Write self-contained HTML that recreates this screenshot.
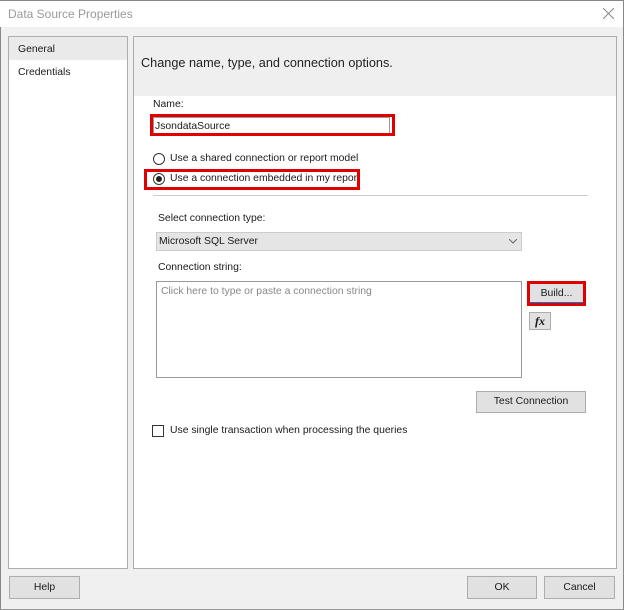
<!DOCTYPE html>
<html><head><style>
*{margin:0;padding:0;box-sizing:border-box}
body{width:624px;height:610px;background:#f0f0f0;font-family:"Liberation Sans",sans-serif;font-size:10.4px;color:#1a1a1a;position:relative;overflow:hidden}
.a{position:absolute}
.btn{position:absolute;background:#e1e1e1;border:1px solid #adadad;text-align:center;font-size:10.4px}
.red{position:absolute;border:3px solid #e00000}
</style></head><body>
<div class="a" style="left:0;top:0;width:624px;height:27px;background:#fff;border-top:1px solid #888;border-right:1px solid #888"></div>
<div class="a" style="left:8px;top:7px;font-size:12px;color:#999">Data Source Properties</div>
<svg class="a" style="left:603px;top:8px" width="11" height="11"><path d="M0 0L11 11M11 0L0 11" stroke="#888" stroke-width="1"/></svg>
<div class="a" style="left:0;top:27px;width:1px;height:583px;background:#888"></div>
<div class="a" style="left:623px;top:27px;width:1px;height:583px;background:#888"></div>
<div class="a" style="left:0;top:609px;width:624px;height:1px;background:#999"></div>

<div class="a" style="left:8px;top:36px;width:120px;height:533px;background:#fff;border:1px solid #adadad"></div>
<div class="a" style="left:9px;top:37px;width:118px;height:23px;background:#eaeaea"></div>
<div class="a" style="left:18px;top:44px">General</div>
<div class="a" style="left:18px;top:67px">Credentials</div>

<div class="a" style="left:133px;top:36px;width:484px;height:533px;background:#fff;border:1px solid #adadad"></div>
<div class="a" style="left:134px;top:37px;width:482px;height:59px;background:#efefef"></div>
<div class="a" style="left:141px;top:56px;font-size:12.7px;color:#222">Change name, type, and connection options.</div>

<div class="a" style="left:153px;top:99px">Name:</div>
<div class="a" style="left:153px;top:117px;width:237px;height:18px;border:1px solid #999;background:#fff"></div>
<div class="a" style="left:155px;top:121px">JsondataSource</div>
<div class="red" style="left:150px;top:114px;width:245px;height:22px"></div>

<div class="a" style="left:153px;top:153px;width:12px;height:12px;border:1px solid #333;border-radius:50%;background:#fff"></div>
<div class="a" style="left:170px;top:153px">Use a shared connection or report model</div>
<div class="a" style="left:153px;top:173px;width:12px;height:12px;border:1px solid #333;border-radius:50%;background:#fff"></div>
<div class="a" style="left:156px;top:176px;width:6px;height:6px;border-radius:50%;background:#222"></div>
<div class="a" style="left:170px;top:173px">Use a connection embedded in my report</div>
<div class="red" style="left:144px;top:169px;width:216px;height:21px"></div>
<div class="a" style="left:153px;top:195px;width:435px;height:1px;background:#ccc"></div>

<div class="a" style="left:158px;top:213px">Select connection type:</div>
<div class="a" style="left:156px;top:232px;width:366px;height:19px;background:#e5e5e5;border:1px solid #ccc"></div>
<div class="a" style="left:159px;top:236px">Microsoft SQL Server</div>
<svg class="a" style="left:509px;top:239px" width="8" height="5"><path d="M0 0L4 4L8 0" stroke="#666" fill="none"/></svg>

<div class="a" style="left:158px;top:262px">Connection string:</div>
<div class="a" style="left:156px;top:281px;width:366px;height:97px;background:#fff;border:1px solid #999"></div>
<div class="a" style="left:161px;top:286px;color:#888">Click here to type or paste a connection string</div>
<div class="btn" style="left:529px;top:282px;width:55px;height:21px;line-height:21px;border-bottom:1px solid #0078d7">Build...</div>
<div class="red" style="left:527px;top:281px;width:59px;height:25px"></div>
<div class="btn" style="left:529px;top:312px;width:22px;height:18px;line-height:16px;font-family:'Liberation Serif',serif;font-style:italic;font-weight:bold;font-size:12px">fx</div>

<div class="btn" style="left:476px;top:391px;width:110px;height:22px;line-height:20px">Test Connection</div>
<div class="a" style="left:152px;top:425px;width:12px;height:12px;border:1px solid #333;background:#fff"></div>
<div class="a" style="left:170px;top:425px">Use single transaction when processing the queries</div>

<div class="btn" style="left:9px;top:576px;width:71px;height:23px;line-height:21px">Help</div>
<div class="btn" style="left:467px;top:576px;width:70px;height:23px;line-height:21px">OK</div>
<div class="btn" style="left:544px;top:576px;width:71px;height:23px;line-height:21px">Cancel</div>
</body></html>
